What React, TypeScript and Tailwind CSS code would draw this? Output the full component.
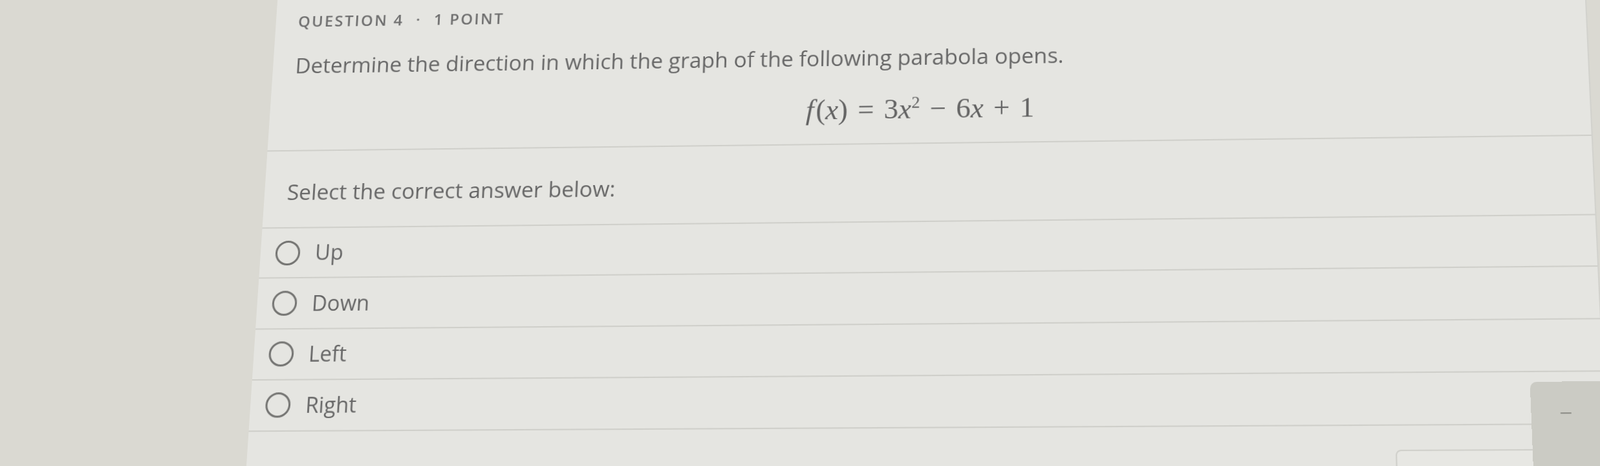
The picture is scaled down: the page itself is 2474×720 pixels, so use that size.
const options = ["Up", "Down", "Left", "Right"]

function Radio() {
  return <span className="h-[38px] w-[38px] shrink-0 rounded-full border-[3px] border-[#747472]" />
}

export default function App() {
  return (
    <div className="relative h-[720px] w-full overflow-hidden bg-[#dad9d2] font-['Open_Sans',sans-serif]">
      {/* the photo is taken at an angle, so the whole page sits on a slight perspective */}
      <div className="flex h-[720px] w-full origin-[440px_360px] items-start [transform:matrix3d(1,-0.01,0,-0.000015,-0.065,1,0,-0.000055,0,0,1,0,0,0,0,1)]">
        <div className="relative -mt-[20px] ml-[405px] w-[2004px] border-r-2 border-[#d2d2cd] bg-[#e5e5e1]">
          <section className="border-b-2 border-[#cfcfca] pb-[28px] pt-[29px]">
            <div className="flex items-center gap-[19px] pl-[35px] text-[24px] font-semibold leading-[36px] tracking-[0.1em] text-[#6f6f6f]">
              <span>QUESTION 4</span>
              <span>·</span>
              <span>1 POINT</span>
            </div>
            <p className="mt-[30px] pl-[35px] text-[33.5px] leading-[44px] text-[#676767]">
              Determine the direction in which the graph of the following parabola opens.
            </p>
            <div className="mt-[36px] text-center font-['Liberation_Serif',serif] text-[44px] leading-[48px] text-[#636363]">
              <span className="mr-[3px] italic">f</span>(<span className="italic">x</span>)
              <span className="mx-[15px]">=</span>3<span className="italic">x</span>
              <sup className="top-[-0.6em] text-[26px]">2</sup>
              <span className="mx-[15px]">−</span>6<span className="italic">x</span>
              <span className="mx-[15px]">+</span>1
            </div>
          </section>

          <section className="border-b-2 border-[#cfcfca] pb-[33px] pl-[35px] pt-[41px] text-[33.5px] leading-[44px] text-[#676767]">
            Select the correct answer below:
          </section>

          {options.map((label) => (
            <label
              key={label}
              className="flex h-[77.25px] items-center gap-[23px] border-b-2 border-[#cfcfca] pl-[23px] text-[32.5px] text-[#676767]"
            >
              <Radio />
              <span>{label}</span>
            </label>
          ))}

          <div className="h-[120px]" />

          {/* floating action buttons in the lower right corner */}
          <div className="absolute left-[1700px] top-[717px] h-[80px] w-[260px] rounded-tl-[8px] border-2 border-[#d0d0cb] bg-[#e7e7e3]" />
          <div className="absolute left-[1897px] top-[619px] h-[200px] w-[200px] rounded-tl-[10px] bg-[#cbcbc4]">
            <div className="ml-[42px] mt-[45px] h-[2px] w-[16px] rounded-full bg-[#8e8e88]" />
          </div>
        </div>
      </div>
    </div>
  )
}
